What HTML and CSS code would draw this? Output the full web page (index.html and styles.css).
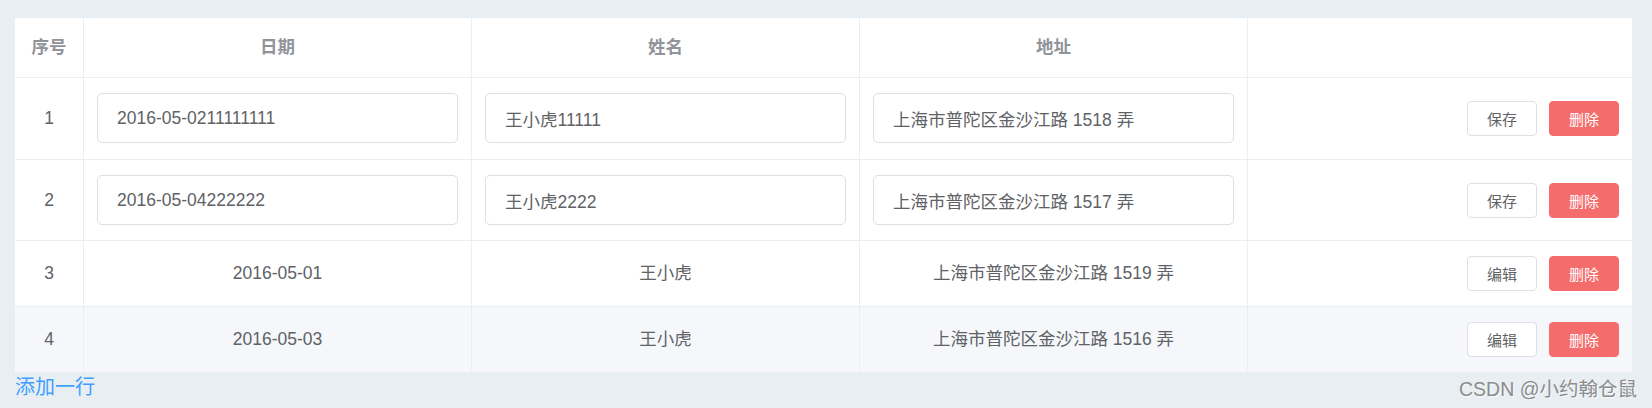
FILE: index.html
```html
<!DOCTYPE html>
<html lang="zh-CN">
<head>
<meta charset="utf-8">
<title>表格</title>
<link rel="stylesheet" href="styles.css">
</head>
<body>
<div class="page">
  <div class="table">
    <div class="row head">
      <div class="cell">序号</div>
      <div class="cell">日期</div>
      <div class="cell">姓名</div>
      <div class="cell">地址</div>
      <div class="cell"></div>
    </div>
    <div class="row first">
      <div class="cell">1</div>
      <div class="cell"><input class="input" value="2016-05-0211111111"></div>
      <div class="cell"><input class="input" value="王小虎11111"></div>
      <div class="cell"><input class="input" value="上海市普陀区金沙江路 1518 弄"></div>
      <div class="cell ops"><button class="btn">保存</button><button class="btn danger">删除</button></div>
    </div>
    <div class="row">
      <div class="cell">2</div>
      <div class="cell"><input class="input" value="2016-05-04222222"></div>
      <div class="cell"><input class="input" value="王小虎2222"></div>
      <div class="cell"><input class="input" value="上海市普陀区金沙江路 1517 弄"></div>
      <div class="cell ops"><button class="btn">保存</button><button class="btn danger">删除</button></div>
    </div>
    <div class="row">
      <div class="cell">3</div>
      <div class="cell">2016-05-01</div>
      <div class="cell">王小虎</div>
      <div class="cell">上海市普陀区金沙江路 1519 弄</div>
      <div class="cell ops"><button class="btn">编辑</button><button class="btn danger">删除</button></div>
    </div>
    <div class="row hover">
      <div class="cell">4</div>
      <div class="cell">2016-05-03</div>
      <div class="cell">王小虎</div>
      <div class="cell">上海市普陀区金沙江路 1516 弄</div>
      <div class="cell ops"><button class="btn">编辑</button><button class="btn danger">删除</button></div>
    </div>
  </div>
  <div class="footer"><a class="add">添加一行</a></div>
</div>
<div class="watermark">CSDN @小约翰仓鼠</div>
</body>
</html>
```
FILE: styles.css
```css
* { box-sizing: border-box; }
html, body { margin: 0; }
body {
  background: #E9EEF3;
  width: 1652px;
  height: 408px;
  overflow: hidden;
  position: relative;
  font-family: "Liberation Sans", "Noto Sans CJK SC", sans-serif;
}
.page { padding: 18px 19px 0 15px; }
.table { background: #fff; width: 1618px; }
.row {
  display: grid;
  grid-template-columns: 69px 388px 388px 388px 385px;
}
.row.hover { background: #F5F7FA; }
.cell {
  padding: 15px 13px;
  border-right: 1px solid #EBEEF5;
  border-bottom: 1px solid #EBEEF5;
  font-size: 17.5px;
  line-height: 29px;
  color: #606266;
  display: flex;
  align-items: center;
  justify-content: center;
  text-align: center;
}
.row.first .cell { padding-bottom: 16px; }
.head .cell { color: #909399; font-weight: bold; }
.cell.ops { justify-content: flex-end; }
.input {
  width: 100%;
  height: 50px;
  border: 1px solid #DCDFE6;
  border-radius: 5px;
  padding: 0 19px;
  font-family: inherit;
  font-size: 17.5px;
  color: #606266;
  background: #fff;
  outline: none;
}
.btn {
  width: 70px;
  height: 35px;
  padding: 0;
  font-family: inherit;
  font-size: 15px;
  border-radius: 4px;
  border: 1px solid #DCDFE6;
  background: #fff;
  color: #606266;
}
.btn + .btn { margin-left: 12px; }
.btn.danger { background: #F56C6C; border-color: #F56C6C; color: #fff; }
.footer { margin-top: 2px; height: 24px; line-height: 24px; }
.add { color: #409EFF; font-size: 20px; }
.watermark {
  position: absolute;
  right: 15px;
  bottom: 8px;
  font-size: 19.5px;
  line-height: 22px;
  color: #8c8c8c;
  text-shadow: 1px 1px 1px rgba(255,255,255,0.7);
}
```
